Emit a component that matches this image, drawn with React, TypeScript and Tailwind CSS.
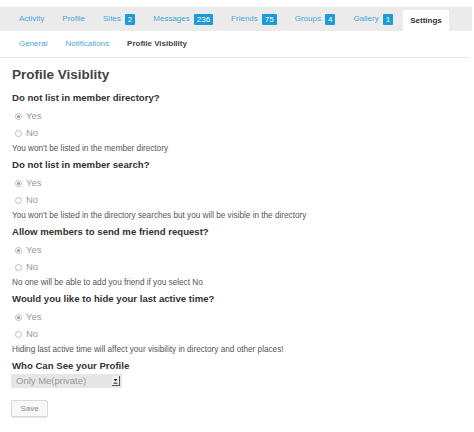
import React from 'react'

type Tab = { label: string; count?: number; active?: boolean }

const tabs: Tab[] = [
  { label: 'Activity' },
  { label: 'Profile' },
  { label: 'Sites', count: 2 },
  { label: 'Messages', count: 236 },
  { label: 'Friends', count: 75 },
  { label: 'Groups', count: 4 },
  { label: 'Gallery', count: 1 },
  { label: 'Settings', active: true },
]

const subTabs = [
  { label: 'General' },
  { label: 'Notifications' },
  { label: 'Profile Visibility', active: true },
]

const questions = [
  {
    title: 'Do not list in member directory?',
    help: "You won't be listed in the member directory",
  },
  {
    title: 'Do not list in member search?',
    help: "You won't be listed in the directory searches but you will be visible in the directory",
  },
  {
    title: 'Allow members to send me friend request?',
    help: 'No one will be able to add you friend if you select No',
  },
  {
    title: 'Would you like to hide your last active time?',
    help: 'Hiding last active time will affect your visibility in directory and other places!',
  },
]

function Radio({ label, checked }: { label: string; checked?: boolean }) {
  return (
    <label className="flex h-[14px] items-center pl-[15px] text-[9.5px] text-[#999]">
      <span className="flex size-[7px] items-center justify-center rounded-full border border-[#bdbdbd] bg-white">
        {checked && <span className="size-[3px] rounded-full bg-[#9a9a9a]" />}
      </span>
      <span className="ml-[4px]">{label}</span>
    </label>
  )
}

export default function App() {
  return (
    <div className="min-h-[432px] w-[474px] bg-white pt-[7px] font-['Liberation_Sans',Arial,sans-serif]">
      {/* main profile tabs */}
      <nav className="mr-[2px] flex h-[24px] items-end bg-[#ebebeb] pl-[10px]">
        {tabs.map((tab) =>
          tab.active ? (
            <span
              key={tab.label}
              className="ml-[1px] flex h-[21px] items-center bg-white px-[7px] text-[8px] font-bold text-[#333]"
            >
              {tab.label}
            </span>
          ) : (
            <span
              key={tab.label}
              className="flex h-[24px] items-center px-[9px] text-[8px] text-[#4aa7d6]"
            >
              {tab.label}
              {tab.count !== undefined && (
                <span className="ml-[4px] rounded-[1px] bg-[#1b9cd8] px-[3px] text-[8px] leading-[11px] text-white">
                  {tab.count}
                </span>
              )}
            </span>
          ),
        )}
      </nav>

      {/* settings sub navigation */}
      <nav className="mr-[4px] flex h-[27px] items-center border-b border-[#e6e6e6] pl-[10px]">
        {subTabs.map((s) => (
          <span
            key={s.label}
            className={
              s.active
                ? 'px-[9px] text-[8px] font-bold text-[#444]'
                : 'px-[9px] text-[8px] text-[#4aa7d6]'
            }
          >
            {s.label}
          </span>
        ))}
      </nav>

      <main className="px-[12px]">
        <h1 className="mt-[8px] text-[13.5px] leading-[18px] font-bold text-[#444]">Profile Visiblity</h1>

        <div className="mt-[7px] flex flex-col">
          {questions.map((q) => (
            <section key={q.title} className="mb-[4.5px]">
              <h2 className="text-[9.6px] leading-[14px] font-bold text-[#333]">{q.title}</h2>
              <div className="-ml-[12px] mt-[4px] flex flex-col gap-[3.5px]">
                <Radio label="Yes" checked />
                <Radio label="No" />
              </div>
              <p className="mt-[3px] text-[8.2px] leading-[10px] text-[#555]">{q.help}</p>
            </section>
          ))}

          <h2 className="text-[9.6px] leading-[14px] font-bold text-[#333]">Who Can See your Profile</h2>
          <div className="-ml-[1px] mt-[1px] flex h-[14px] w-[111px] items-center justify-between bg-[#e6e6e6] pl-[5px] pr-[2px]">
            <span className="text-[9.5px] text-[#9a9a9a]">Only Me(private)</span>
            <span className="flex h-[10px] w-[8px] items-center justify-center border-r border-b border-[#555] bg-[#f4f4f4]">
              <svg width="5" height="6" viewBox="0 0 5 6">
                <path d="M0.5 1 L4.5 1 L2.5 3.5 Z" fill="#222" />
                <path d="M0.5 5.2 H4.5" stroke="#222" strokeWidth="1" />
              </svg>
            </span>
          </div>

          <button className="-ml-[1px] mt-[12px] h-[17px] w-[37px] rounded-[2px] border border-[#d9d9d9] bg-[#f8f8f8] text-[8px] text-[#888] shadow-[0_1px_1px_rgba(0,0,0,0.12)]">
            Save
          </button>
        </div>
      </main>
    </div>
  )
}
